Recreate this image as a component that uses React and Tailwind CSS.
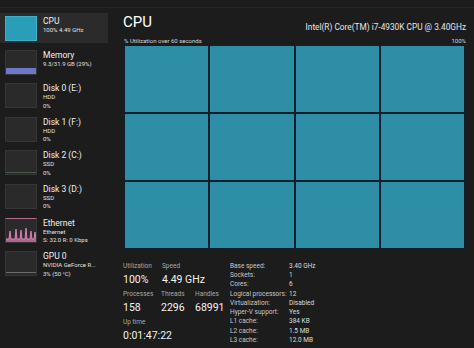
import React from 'react';

const font = { fontFamily: 'Roboto, "Noto Sans", sans-serif' };

const items = [
  { name: 'CPU', lines: ['100% 4.49 GHz'], kind: 'cpu' },
  { name: 'Memory', lines: ['9.3/31.9 GB (29%)'], kind: 'mem' },
  { name: 'Disk 0 (E:)', lines: ['HDD', '0%'], kind: 'disk' },
  { name: 'Disk 1 (F:)', lines: ['HDD', '0%'], kind: 'disk' },
  { name: 'Disk 2 (C:)', lines: ['SSD', '0%'], kind: 'disk2' },
  { name: 'Disk 3 (D:)', lines: ['SSD', '0%'], kind: 'disk' },
  { name: 'Ethernet', lines: ['Ethernet', 'S: 32.0 R: 0 Kbps'], kind: 'eth' },
  { name: 'GPU 0', lines: ['NVIDIA GeForce R...', '3% (50 °C)'], kind: 'gpu' },
];

const specs = [
  ['Base speed:', '3.40 GHz'],
  ['Sockets:', '1'],
  ['Cores:', '6'],
  ['Logical processors:', '12'],
  ['Virtualization:', 'Disabled'],
  ['Hyper-V support:', 'Yes'],
  ['L1 cache:', '384 KB'],
  ['L2 cache:', '1.5 MB'],
  ['L3 cache:', '12.0 MB'],
];

const Thumb = ({ kind }) => {
  if (kind === 'cpu') {
    return <div className="w-[32px] h-[25px] bg-[#2a9db8] border border-[#3fb0c8]" />;
  }
  if (kind === 'mem') {
    return (
      <div className="w-[32px] h-[25px] bg-[#2a2a2a] border border-[#363636] flex flex-col justify-end">
        <div className="h-[6px] bg-[#6f78c8]" />
      </div>
    );
  }
  if (kind === 'eth') {
    return (
      <div className="w-[32px] h-[25px] bg-[#2a2a2a] border border-[#363636] border-t-[#b86a92]">
        <svg width="30" height="23" viewBox="0 0 30 23">
          <path
            d="M0 23 L0 20 L3 20 L4 12 L5 20 L9 20 L10 10 L11 20 L14 20 L15 11 L16 20 L19 20 L20 9 L21 20 L24 20 L25 12 L26 20 L28 20 L29 13 L30 20 L30 23 Z"
            fill="#b0638f"
          />
          <path
            d="M0 20 L3 20 L4 12 L5 20 L9 20 L10 10 L11 20 L14 20 L15 11 L16 20 L19 20 L20 9 L21 20 L24 20 L25 12 L26 20 L28 20 L29 13 L30 20"
            fill="none"
            stroke="#e892c0"
            strokeWidth="0.8"
          />
        </svg>
      </div>
    );
  }
  return (
    <div className="w-[32px] h-[25px] bg-[#2a2a2a] border border-[#363636] flex flex-col justify-end">
      {kind === 'gpu' && <div className="h-px bg-[#6b6b6b] mb-[2px]" />}
      {kind === 'disk2' && <div className="h-px bg-[#4a5a4a] mb-[1px]" />}
    </div>
  );
};

const SideItem = ({ item, active }) => (
  <div
    className={`h-[30px] w-[108px] flex items-start pl-[5px] pt-[3px] ${
      active ? 'bg-[#2b2b2b]' : ''
    }`}
  >
    <Thumb kind={item.kind} />
    <div className="ml-[6px]">
      <div className="text-[8.5px] leading-[10px] text-[#f0f0f0] whitespace-nowrap">{item.name}</div>
      {item.lines.map((l) => (
        <div key={l} className="text-[6px] leading-[8.5px] text-[#e0e0e0] whitespace-nowrap">
          {l}
        </div>
      ))}
    </div>
  </div>
);

const Stat = ({ label, value, className = '' }) => (
  <div className={className}>
    <div className="text-[6.5px] leading-[8px] text-[#a8a8a8] whitespace-nowrap">{label}</div>
    <div className="text-[10.5px] leading-[18px] mt-[1px] text-[#f2f2f2] whitespace-nowrap">{value}</div>
  </div>
);

export default function App() {
  return (
    <div className="w-[474px] h-[348px] bg-[#1c1c1c] overflow-hidden flex flex-col" style={font}>
      <div className="h-[8px] border-b border-[#262626] shrink-0" />
      <div className="flex flex-1">
        <div className="w-[115px] pt-[5px] flex flex-col gap-[3.6px]">
          {items.map((it, i) => (
            <SideItem key={it.name} item={it} active={i === 0} />
          ))}
        </div>

        <div className="flex-1 pl-[8px] pr-[8px] flex flex-col">
          <div className="flex items-end justify-between h-[24px]">
            <div className="text-[15px] leading-[20px] text-white">CPU</div>
            <div className="text-[8.3px] leading-[12px] text-[#e6e6e6] -mb-[1px]">
              Intel(R) Core(TM) i7-4930K CPU @ 3.40GHz
            </div>
          </div>
          <div className="flex justify-between items-end h-[12px] mt-[1px]">
            <div className="text-[6px] leading-[8px] text-[#d8d8d8] pl-[1px]">% Utilization over 60 seconds</div>
            <div className="text-[6px] leading-[8px] text-[#d8d8d8]">100%</div>
          </div>
          <div className="w-[341px] h-[204px] ml-[1px] bg-[#0f202c] p-px grid grid-cols-4 grid-rows-3 gap-[2px]">
            {Array.from({ length: 12 }).map((_, i) => (
              <div key={i} className="bg-[#2d8ea6]" />
            ))}
          </div>

          <div className="flex mt-[13px]">
            <div className="w-[107px]">
              <div className="flex">
                <Stat label="Utilization" value="100%" className="w-[39px]" />
                <Stat label="Speed" value="4.49 GHz" />
              </div>
              <div className="flex mt-[1px]">
                <Stat label="Processes" value="158" className="w-[38px]" />
                <Stat label="Threads" value="2296" className="w-[34px]" />
                <Stat label="Handles" value="68991" />
              </div>
              <Stat label="Up time" value="0:01:47:22" className="mt-[1px]" />
            </div>
            <div className="grid grid-cols-[59px_auto] text-[6.5px] leading-[9.1px] text-[#dcdcdc]">
              {specs.map(([k, v]) => (
                <React.Fragment key={k}>
                  <div className="text-[#c8c8c8] whitespace-nowrap">{k}</div>
                  <div className="whitespace-nowrap">{v}</div>
                </React.Fragment>
              ))}
            </div>
          </div>
        </div>
      </div>
    </div>
  );
}
